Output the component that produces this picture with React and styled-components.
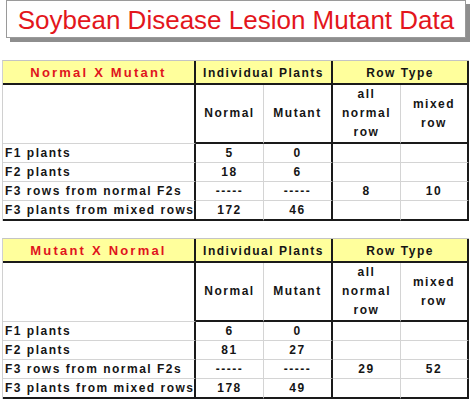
import React from "react";
import styled, { createGlobalStyle } from "styled-components";

const Global = createGlobalStyle`
  html, body { margin: 0; padding: 0; background: #ffffff; }
  body { font-family: "Liberation Sans", Arial, sans-serif; }
`;

const Page = styled.div`
  width: 474px;
  height: 399px;
  overflow: hidden;
  padding-left: 2px;
  box-sizing: border-box;
`;

const TitleBox = styled.div`
  margin-left: 4px;
  width: 460px;
  height: 38px;
  box-sizing: border-box;
  border: 1px solid #9a9a9a;
  background: #ffffff;
  box-shadow: 4px 4px 0 #8e8e8e;
  display: flex;
  align-items: center;
  justify-content: center;
`;

const TitleText = styled.h1`
  margin: 0;
  font-size: 26px;
  font-weight: normal;
  color: #e3161c;
  line-height: 1;
  padding-top: 1px;
  white-space: nowrap;
`;

const Table = styled.table`
  margin-top: ${(p) => p.$gap}px;
  width: 467px;
  table-layout: fixed;
  border-collapse: separate;
  border-spacing: 0;
  border-top: 1px solid #c4c4c4;
  border-left: 1px solid #d0d0d0;
`;

const Cell = styled.td`
  box-sizing: border-box;
  padding: 0;
  font-size: 12px;
  font-weight: bold;
  letter-spacing: 1.5px;
  color: #151515;
  text-align: ${(p) => (p.$left ? "left" : "center")};
  padding-left: ${(p) => (p.$left ? "2px" : "0")};
  border-right: ${(p) =>
    p.$thickRight ? "2px solid #1a1a1a" : "1px solid #d4d4d4"};
  border-bottom: ${(p) =>
    p.$thickBottom ? "2px solid #1a1a1a" : "1px solid #d4d4d4"};
  white-space: nowrap;
  overflow: hidden;
`;

const HeadCell = styled(Cell).attrs({ as: "th" })`
  height: 24px;
  background: #ffff9c;
  border-bottom: 2px solid #1a1a1a;
  font-size: ${(p) => (p.$red ? "13px" : "12px")};
  letter-spacing: ${(p) => (p.$red ? "2.2px" : "1.5px")};
  color: ${(p) => (p.$red ? "#e0141c" : "#151515")};
  padding-top: 1px;
`;

const SubCell = styled(Cell)`
  height: 59px;
  line-height: 19px;
  vertical-align: middle;
  white-space: normal;
`;

const BodyCell = styled(Cell)`
  height: 19px;
  line-height: 18px;
`;

function DataTable({ title, rows, gap }) {
  const last = rows.length - 1;
  return (
    <Table $gap={gap}>
      <colgroup>
        <col style={{ width: 193 }} />
        <col style={{ width: 68 }} />
        <col style={{ width: 69 }} />
        <col style={{ width: 68 }} />
        <col style={{ width: 68 }} />
      </colgroup>
      <thead>
        <tr>
          <HeadCell $red $thickRight>{title}</HeadCell>
          <HeadCell colSpan={2} $thickRight>Individual Plants</HeadCell>
          <HeadCell colSpan={2} $thickRight>Row Type</HeadCell>
        </tr>
      </thead>
      <tbody>
        <tr>
          <SubCell $thickRight />
          <SubCell $thickBottom>Normal</SubCell>
          <SubCell $thickBottom $thickRight>Mutant</SubCell>
          <SubCell $thickBottom>
            all
            <br />
            normal
            <br />
            row
          </SubCell>
          <SubCell $thickBottom $thickRight>
            mixed
            <br />
            row
          </SubCell>
        </tr>
        {rows.map((r, i) => (
          <tr key={r.label}>
            <BodyCell $left $thickRight $thickBottom={i === last}>{r.label}</BodyCell>
            <BodyCell $thickBottom={i === last}>{r.normal}</BodyCell>
            <BodyCell $thickRight $thickBottom={i === last}>{r.mutant}</BodyCell>
            <BodyCell $thickBottom={i === last}>{r.allNormal}</BodyCell>
            <BodyCell $thickRight $thickBottom={i === last}>{r.mixed}</BodyCell>
          </tr>
        ))}
      </tbody>
    </Table>
  );
}

const table1 = [
  { label: "F1 plants", normal: "5", mutant: "0", allNormal: "", mixed: "" },
  { label: "F2 plants", normal: "18", mutant: "6", allNormal: "", mixed: "" },
  { label: "F3 rows from normal F2s", normal: "-----", mutant: "-----", allNormal: "8", mixed: "10" },
  { label: "F3 plants from mixed rows", normal: "172", mutant: "46", allNormal: "", mixed: "" },
];

const table2 = [
  { label: "F1 plants", normal: "6", mutant: "0", allNormal: "", mixed: "" },
  { label: "F2 plants", normal: "81", mutant: "27", allNormal: "", mixed: "" },
  { label: "F3 rows from normal F2s", normal: "-----", mutant: "-----", allNormal: "29", mixed: "52" },
  { label: "F3 plants from mixed rows", normal: "178", mutant: "49", allNormal: "", mixed: "" },
];

export default function App() {
  return (
    <Page>
      <Global />
      <TitleBox>
        <TitleText>Soybean Disease Lesion Mutant Data</TitleText>
      </TitleBox>
      <DataTable gap={22} title="Normal X Mutant" rows={table1} />
      <DataTable gap={17} title="Mutant X Normal" rows={table2} />
    </Page>
  );
}
